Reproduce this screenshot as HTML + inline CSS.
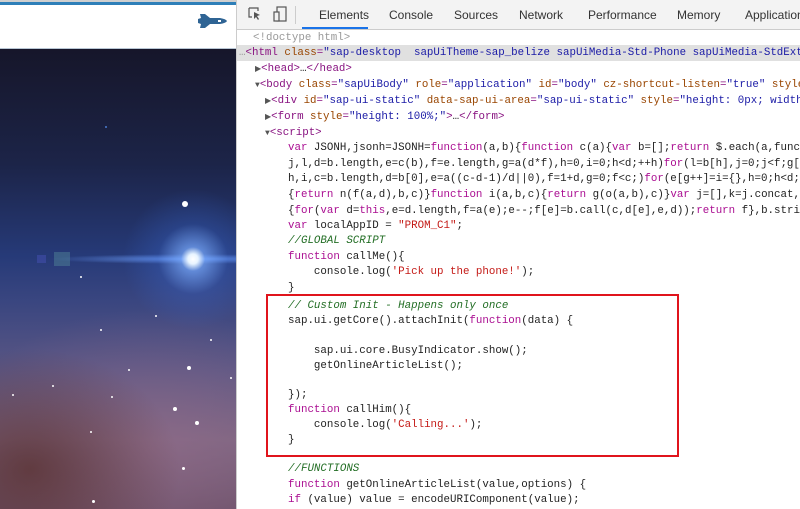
<!DOCTYPE html>
<html><head><style>
*{margin:0;padding:0;box-sizing:border-box}
body{width:800px;height:509px;overflow:hidden;position:relative;background:#fff;font-family:"Liberation Sans",sans-serif}
#left{position:absolute;left:0;top:0;width:236px;height:509px;background:#fff}
#left .topbar{position:absolute;left:0;top:0;width:236px;height:2px;background:#cfcfcf}
#left .blue{position:absolute;left:0;top:2px;width:236px;height:3px;background:#2e7fb8}
#left .hdr{position:absolute;left:0;top:5px;width:236px;height:44px;background:#fff;border-bottom:1px solid #b8c6d4}
#sky{position:absolute;left:0;top:49px;width:236px;height:460px;overflow:hidden;
background:
radial-gradient(circle at 193px 210px,#fff 0,#e8f4ff 5px,rgba(120,170,255,.7) 12px,rgba(60,110,220,.25) 35px,rgba(0,0,0,0) 70px),
radial-gradient(ellipse 140px 5px at 190px 210px,rgba(110,160,255,.8),rgba(0,0,0,0)),
radial-gradient(ellipse 150px 120px at 30px 420px,rgba(90,50,50,.8),rgba(0,0,0,0)),
radial-gradient(ellipse 200px 140px at 150px 400px,rgba(150,110,140,.6),rgba(0,0,0,0)),
linear-gradient(180deg,#16162a 0%,#1c2448 25%,#263a78 45%,#3a4680 55%,#5a5684 70%,#7a6480 85%,#6a5068 100%)}
.star{position:absolute;width:2px;height:2px;background:#fff;border-radius:50%}
#dev{position:absolute;left:236px;top:0;width:564px;height:509px;background:#fff;border-left:1px solid #ccc}
#tabs{position:absolute;left:0;top:0;width:564px;height:30px;background:#f3f3f3;border-bottom:1px solid #ccc}
#tabs span{position:absolute;top:8px;font-size:12px;color:#333}
#code{position:absolute;left:0;top:29px;width:564px;font-family:"Liberation Mono",monospace;font-size:10.8px;color:#222;white-space:pre}
.l{position:absolute;height:16px;line-height:16px}
.t{color:#881280}.a{color:#994500}.v{color:#1a1aa6}.k{color:#aa0d91}.s{color:#c41a16}.c{color:#236e25;font-style:italic}.g{color:#999}
.tri{color:#555;font-size:8px}
</style></head><body>
<div id="left">
<div class="topbar"></div><div class="blue"></div>
<div class="hdr">
<svg style="position:absolute;left:198px;top:9px" width="30" height="14" viewBox="0 0 30 14"><path d="M2 0 L7 0 L12 4 L22 4 Q28 5 29 7 Q28 9 22 10 L12 10 L7 14 L2 14 L3 10 L0 9 L0 5 L3 4 Z" fill="#2f6494"/><rect x="20" y="6" width="3" height="2" fill="#fff"/></svg>
</div>
<div id="sky">
<div class="star" style="left:182px;top:152px;width:6px;height:6px"></div>
<div class="star" style="left:105px;top:77px;background:#4a7ad0"></div>
<div class="star" style="left:80px;top:227px"></div>
<div class="star" style="left:100px;top:280px"></div>
<div class="star" style="left:155px;top:266px"></div>
<div class="star" style="left:210px;top:290px"></div>
<div class="star" style="left:187px;top:317px;width:4px;height:4px"></div>
<div class="star" style="left:173px;top:358px;width:4px;height:4px"></div>
<div class="star" style="left:195px;top:372px;width:4px;height:4px"></div>
<div class="star" style="left:182px;top:418px;width:3px;height:3px"></div>
<div class="star" style="left:52px;top:336px"></div>
<div class="star" style="left:128px;top:320px"></div>
<div class="star" style="left:90px;top:382px"></div>
<div class="star" style="left:12px;top:345px"></div>
<div class="star" style="left:230px;top:328px"></div>
<div class="star" style="left:111px;top:347px"></div>
<div class="star" style="left:92px;top:451px;width:3px;height:3px"></div>
<div style="position:absolute;left:54px;top:203px;width:16px;height:14px;background:rgba(80,130,150,.5)"></div>
<div style="position:absolute;left:37px;top:206px;width:9px;height:8px;background:rgba(70,80,180,.5)"></div>
</div>
</div>
<div id="dev">
<div id="tabs">
<svg style="position:absolute;left:11px;top:7px" width="14" height="14" viewBox="0 0 14 14"><path d="M1 1h9v3M1 1v9h3" stroke="#555" fill="none" stroke-width="1.2"/><path d="M6 5l6 3-3 1 2 3-1 1-2-3-2 2z" fill="#555"/></svg>
<svg style="position:absolute;left:36px;top:6px" width="14" height="16" viewBox="0 0 14 16"><rect x="4" y="1" width="9" height="14" fill="none" stroke="#555" stroke-width="1.2"/><rect x="1" y="6" width="5" height="9" fill="#f3f3f3" stroke="#555" stroke-width="1.2"/></svg>
<div style="position:absolute;left:58px;top:6px;width:1px;height:18px;background:#ccc"></div>
<span style="left:82px;color:#333">Elements</span>
<div style="position:absolute;left:65px;top:27px;width:66px;height:2px;background:#1a73e8"></div>
<span style="left:152px">Console</span>
<span style="left:217px">Sources</span>
<span style="left:282px">Network</span>
<span style="left:351px">Performance</span>
<span style="left:440px">Memory</span>
<span style="left:508px">Application</span>
</div>
<div id="code">
<div class="l g" style="top:1px;left:16px">&lt;!doctype html&gt;</div>
<div style="position:absolute;left:0;top:16px;width:564px;height:16px;background:#e0e0e0"></div>
<div class="l" style="top:16px;left:2px"><span class="g">…</span><span class="t">&lt;html</span> <span class="a">class</span><span class="t">=</span><span class="v">"sap-desktop  sapUiTheme-sap_belize sapUiMedia-Std-Phone sapUiMedia-StdExt</span></div>
<div class="l" style="top:32px;left:18px"><span class="tri">▶</span><span class="t">&lt;head&gt;</span>…<span class="t">&lt;/head&gt;</span></div>
<div class="l" style="top:48px;left:18px"><span class="tri">▼</span><span class="t">&lt;body</span> <span class="a">class</span><span class="t">=</span><span class="v">"sapUiBody"</span> <span class="a">role</span><span class="t">=</span><span class="v">"application"</span> <span class="a">id</span><span class="t">=</span><span class="v">"body"</span> <span class="a">cz-shortcut-listen</span><span class="t">=</span><span class="v">"true"</span> <span class="a">style</span></div>
<div class="l" style="top:64px;left:28px"><span class="tri">▶</span><span class="t">&lt;div</span> <span class="a">id</span><span class="t">=</span><span class="v">"sap-ui-static"</span> <span class="a">data-sap-ui-area</span><span class="t">=</span><span class="v">"sap-ui-static"</span> <span class="a">style</span><span class="t">=</span><span class="v">"height: 0px; width</span></div>
<div class="l" style="top:80px;left:28px"><span class="tri">▶</span><span class="t">&lt;form</span> <span class="a">style</span><span class="t">=</span><span class="v">"height: 100%;"</span><span class="t">&gt;</span>…<span class="t">&lt;/form&gt;</span></div>
<div class="l" style="top:96px;left:28px"><span class="tri">▼</span><span class="t">&lt;script&gt;</span></div>
<div class="l" style="top:111px;left:51px"><span class="k">var</span> JSONH,jsonh=JSONH=<span class="k">function</span>(a,b){<span class="k">function</span> c(a){<span class="k">var</span> b=[];<span class="k">return</span> $.each(a,func</div>
<div class="l" style="top:127px;left:51px">j,l,d=b.length,e=c(b),f=e.length,g=a(d*f),h=0,i=0;h&lt;d;++h)<span class="k">for</span>(l=b[h],j=0;j&lt;f;g[</div>
<div class="l" style="top:142px;left:51px">h,i,c=b.length,d=b[0],e=a((c-d-1)/d||0),f=1+d,g=0;f&lt;c;)<span class="k">for</span>(e[g++]=i={},h=0;h&lt;d;</div>
<div class="l" style="top:158px;left:51px">{<span class="k">return</span> n(f(a,d),b,c)}<span class="k">function</span> i(a,b,c){<span class="k">return</span> g(o(a,b),c)}<span class="k">var</span> j=[],k=j.concat,</div>
<div class="l" style="top:174px;left:51px">{<span class="k">for</span>(<span class="k">var</span> d=<span class="k">this</span>,e=d.length,f=a(e);e--;f[e]=b.call(c,d[e],e,d));<span class="k">return</span> f},b.stri</div>
<div class="l" style="top:189px;left:51px"><span class="k">var</span> localAppID = <span class="s">"PROM_C1"</span>;</div>
<div class="l c" style="top:204px;left:51px">//GLOBAL SCRIPT</div>
<div class="l" style="top:220px;left:51px"><span class="k">function</span> callMe(){</div>
<div class="l" style="top:235px;left:51px">    console.log(<span class="s">'Pick up the phone!'</span>);</div>
<div class="l" style="top:251px;left:51px">}</div>
<div class="l c" style="top:269px;left:51px">// Custom Init - Happens only once</div>
<div class="l" style="top:284px;left:51px">sap.ui.getCore().attachInit(<span class="k">function</span>(data) {</div>
<div class="l" style="top:314px;left:51px">    sap.ui.core.BusyIndicator.show();</div>
<div class="l" style="top:329px;left:51px">    getOnlineArticleList();</div>
<div class="l" style="top:358px;left:51px">});</div>
<div class="l" style="top:373px;left:51px"><span class="k">function</span> callHim(){</div>
<div class="l" style="top:388px;left:51px">    console.log(<span class="s">'Calling...'</span>);</div>
<div class="l" style="top:403px;left:51px">}</div>
<div class="l c" style="top:432px;left:51px">//FUNCTIONS</div>
<div class="l" style="top:448px;left:51px"><span class="k">function</span> getOnlineArticleList(value,options) {</div>
<div class="l" style="top:463px;left:51px"><span class="k">if</span> (value) value = encodeURIComponent(value);</div>
</div>
<div style="position:absolute;left:29px;top:294px;width:413px;height:163px;border:2px solid #e0141c"></div>
</div>
</body></html>
